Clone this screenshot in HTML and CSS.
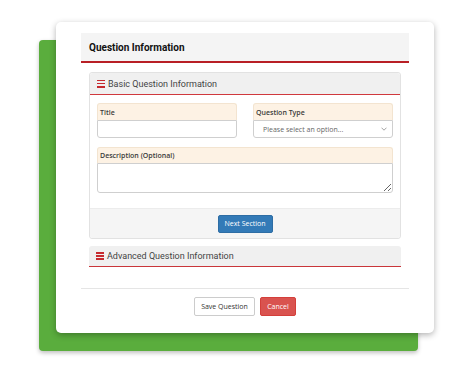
FILE: index.html
```html
<!DOCTYPE html>
<html>
<head>
<meta charset="utf-8">
<link rel="stylesheet" href="styles.css">
</head>
<body>
<div class="stage">
  <div class="green"></div>
  <div class="card">
    <div class="main-head">Question Information</div>
    <div class="main-body">
      <div class="panel">
        <div class="panel-head"><span class="burger"><i></i><i></i><i></i></span>Basic Question Information</div>
        <div class="panel-body">
          <div class="row">
            <div class="field">
              <div class="lbl">Title</div>
              <input class="ctl" type="text">
            </div>
            <div class="field">
              <div class="lbl">Question Type</div>
              <div class="ctl select"><span>Please select an option...</span><svg width="6" height="4" viewBox="0 0 6 4"><path d="M0.5 0.7 L3 3.2 L5.5 0.7" fill="none" stroke="#999" stroke-width="0.9"/></svg></div>
            </div>
          </div>
          <div class="field wide">
            <div class="lbl">Description (Optional)</div>
            <textarea class="ctl area"></textarea>
          </div>
        </div>
        <div class="panel-foot">
          <button class="btn btn-blue">Next Section</button>
        </div>
      </div>
      <div class="panel closed">
        <div class="panel-head"><span class="burger"><i></i><i></i><i></i></span>Advanced Question Information</div>
      </div>
    </div>
    <div class="actions">
      <button class="btn btn-white">Save Question</button>
      <button class="btn btn-red">Cancel</button>
    </div>
  </div>
</div>
</body>
</html>
```

FILE: styles.css
```css
* { box-sizing: border-box; }
html, body { margin: 0; padding: 0; background: #fff; }
body { width: 474px; height: 374px; overflow: hidden; font-family: "Open Sans", "Liberation Sans", sans-serif; }

.stage { display: grid; }
.green, .card { grid-area: 1 / 1; }

.green {
  margin: 40px 0 0 39px;
  width: 379px;
  height: 311px;
  background: #5aad3d;
  border-radius: 4px;
  box-shadow: 0 2px 4px rgba(0,0,0,0.25);
}

.card {
  margin: 22px 0 0 56px;
  width: 378px;
  height: 311px;
  background: #fff;
  border-radius: 5px;
  box-shadow: 0 2px 6px rgba(0,0,0,0.3);
  padding: 11px 25px 0 25px;
  display: flex;
  flex-direction: column;
  position: relative;
}

.main-head {
  height: 30px;
  background: #f4f4f4;
  border-bottom: 2px solid #b81f25;
  font-family: Roboto, "Liberation Sans", sans-serif;
  font-weight: 700;
  font-size: 10px;
  color: #111;
  display: flex;
  align-items: center;
  padding-left: 8px;
  padding-top: 1px;
}

.main-body {
  padding: 9px 8px 0 8px;
  display: flex;
  flex-direction: column;
  gap: 7px;
}

.panel {
  border: 1px solid #e2e2e2;
  border-radius: 3px;
  background: #fff;
}
.panel.closed { border: none; border-radius: 3px 3px 0 0; }

.panel-head {
  height: 22px;
  background: #f0f0f0;
  border-bottom: 1px solid #d0393d;
  font-family: Roboto, "Liberation Sans", sans-serif;
  font-size: 9px;
  color: #444;
  display: flex;
  align-items: center;
  padding-left: 7px;
  border-radius: 3px 3px 0 0;
}
.closed .panel-head { height: 21px; border-bottom-color: #c9353a; }

.burger {
  display: inline-flex;
  flex-direction: column;
  justify-content: space-between;
  width: 8px;
  height: 8px;
  margin-right: 3px;
}
.burger i { display: block; height: 1.6px; background: #c62a2f; }

.panel-body {
  padding: 8px 7px 15px 7px;
  display: flex;
  flex-direction: column;
  gap: 9px;
}

.row { display: flex; gap: 16px; }
.row .field { width: 140px; }

.field { display: flex; flex-direction: column; }

.lbl {
  height: 17px;
  background: #fdf2e4;
  border: 1px solid #f3e4d0;
  border-bottom: none;
  border-radius: 3px 3px 0 0;
  font-size: 7px;
  font-weight: 600;
  color: #3a3a3a;
  display: flex;
  align-items: center;
  padding-left: 2px;
}
.wide .lbl { height: 16px; }

.ctl {
  height: 18px;
  border: 1px solid #cfcfcf;
  border-radius: 0 0 3px 3px;
  background: #fff;
  margin: 0;
  padding: 0;
  font: inherit;
  outline: none;
}

.select {
  display: flex;
  align-items: center;
  justify-content: space-between;
  padding: 0 5px 0 9px;
  font-size: 7px;
  color: #666;
}

.area {
  height: 30px;
  resize: vertical;
  display: block;
  width: 100%;
}

.panel-foot {
  height: 30px;
  background: #f5f5f5;
  border-top: 1px solid #ececec;
  display: flex;
  align-items: center;
  justify-content: center;
  border-radius: 0 0 3px 3px;
}

.btn {
  font-family: "Open Sans", "Liberation Sans", sans-serif;
  font-size: 7px;
  height: 19px;
  border-radius: 2px;
  padding: 0;
  margin: 0;
  white-space: nowrap;
  cursor: pointer;
}
.btn-blue { background: #337ab7; border: 1px solid #2e6da4; color: #fff; width: 55px; height: 18px; }
.btn-white { background: #fff; border: 1px solid #ccc; color: #333; width: 61px; }
.btn-red { background: #d9534f; border: 1px solid #d43f3a; color: #fff; width: 36px; }

.actions {
  margin-top: 21px;
  border-top: 1px solid #e5e5e5;
  padding-top: 8px;
  display: flex;
  justify-content: center;
  gap: 5px;
}
```
